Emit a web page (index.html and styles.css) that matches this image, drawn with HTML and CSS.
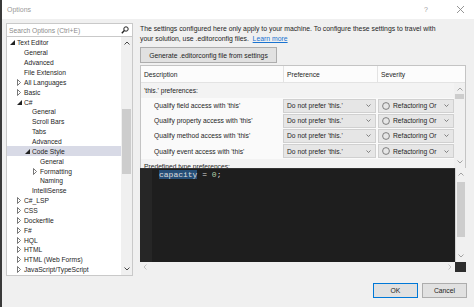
FILE: index.html
```html
<!DOCTYPE html>
<html lang="en">
<head>
    <meta charset="UTF-8">
    <meta name="viewport" content="width=device-width, initial-scale=1.0">
    <title>Options</title>
    <link rel="stylesheet" href="styles.css">
</head>
<body>
    <div class="dialog">
        <div class="titlebar">
            <span class="title">Options</span>
            <span class="help">?</span>
            <svg class="close" width="9" height="9" viewBox="0 0 9 9"><path d="M1 1L8 8M8 1L1 8" stroke="#8a8a8a" stroke-width="0.9"/></svg>
        </div>

        <div class="main">
            <div class="left">
                <div class="search">
                    <span class="search-text">Search Options (Ctrl+E)</span>
                    <svg class="search-icon" width="8" height="8" viewBox="0 0 8 8"><circle cx="5" cy="3" r="2.2" fill="none" stroke="#222" stroke-width="1"/><path d="M3.4 4.6L0.8 7.2" stroke="#222" stroke-width="1.4"/></svg>
                </div>
                <div class="tree">
                    <div class="tree-items">
                        <div class="node lvl0"><span class="tog"><svg width="5" height="5" viewBox="0 0 5 5"><path d="M5 0V5H0Z" fill="#222"/></svg></span>Text Editor</div>
                        <div class="node lvl1"><span class="tog"></span>General</div>
                        <div class="node lvl1"><span class="tog"></span>Advanced</div>
                        <div class="node lvl1"><span class="tog"></span>File Extension</div>
                        <div class="node lvl1"><span class="tog"><svg width="4" height="7" viewBox="0 0 4 7"><path d="M0.5 0.5L3.5 3.5L0.5 6.5Z" fill="none" stroke="#555" stroke-width="0.8"/></svg></span>All Languages</div>
                        <div class="node lvl1"><span class="tog"><svg width="4" height="7" viewBox="0 0 4 7"><path d="M0.5 0.5L3.5 3.5L0.5 6.5Z" fill="none" stroke="#555" stroke-width="0.8"/></svg></span>Basic</div>
                        <div class="node lvl1"><span class="tog"><svg width="5" height="5" viewBox="0 0 5 5"><path d="M5 0V5H0Z" fill="#222"/></svg></span>C#</div>
                        <div class="node lvl2"><span class="tog"></span>General</div>
                        <div class="node lvl2"><span class="tog"></span>Scroll Bars</div>
                        <div class="node lvl2"><span class="tog"></span>Tabs</div>
                        <div class="node lvl2"><span class="tog"></span>Advanced</div>
                        <div class="node lvl2 selected"><span class="tog"><svg width="5" height="5" viewBox="0 0 5 5"><path d="M5 0V5H0Z" fill="#222"/></svg></span>Code Style</div>
                        <div class="node lvl3"><span class="tog"></span>General</div>
                        <div class="node lvl3"><span class="tog"><svg width="4" height="7" viewBox="0 0 4 7"><path d="M0.5 0.5L3.5 3.5L0.5 6.5Z" fill="none" stroke="#555" stroke-width="0.8"/></svg></span>Formatting</div>
                        <div class="node lvl3"><span class="tog"></span>Naming</div>
                        <div class="node lvl2"><span class="tog"></span>IntelliSense</div>
                        <div class="node lvl1"><span class="tog"><svg width="4" height="7" viewBox="0 0 4 7"><path d="M0.5 0.5L3.5 3.5L0.5 6.5Z" fill="none" stroke="#555" stroke-width="0.8"/></svg></span>C#_LSP</div>
                        <div class="node lvl1"><span class="tog"><svg width="4" height="7" viewBox="0 0 4 7"><path d="M0.5 0.5L3.5 3.5L0.5 6.5Z" fill="none" stroke="#555" stroke-width="0.8"/></svg></span>CSS</div>
                        <div class="node lvl1"><span class="tog"><svg width="4" height="7" viewBox="0 0 4 7"><path d="M0.5 0.5L3.5 3.5L0.5 6.5Z" fill="none" stroke="#555" stroke-width="0.8"/></svg></span>Dockerfile</div>
                        <div class="node lvl1"><span class="tog"><svg width="4" height="7" viewBox="0 0 4 7"><path d="M0.5 0.5L3.5 3.5L0.5 6.5Z" fill="none" stroke="#555" stroke-width="0.8"/></svg></span>F#</div>
                        <div class="node lvl1"><span class="tog"><svg width="4" height="7" viewBox="0 0 4 7"><path d="M0.5 0.5L3.5 3.5L0.5 6.5Z" fill="none" stroke="#555" stroke-width="0.8"/></svg></span>HQL</div>
                        <div class="node lvl1"><span class="tog"><svg width="4" height="7" viewBox="0 0 4 7"><path d="M0.5 0.5L3.5 3.5L0.5 6.5Z" fill="none" stroke="#555" stroke-width="0.8"/></svg></span>HTML</div>
                        <div class="node lvl1"><span class="tog"><svg width="4" height="7" viewBox="0 0 4 7"><path d="M0.5 0.5L3.5 3.5L0.5 6.5Z" fill="none" stroke="#555" stroke-width="0.8"/></svg></span>HTML (Web Forms)</div>
                        <div class="node lvl1"><span class="tog"><svg width="4" height="7" viewBox="0 0 4 7"><path d="M0.5 0.5L3.5 3.5L0.5 6.5Z" fill="none" stroke="#555" stroke-width="0.8"/></svg></span>JavaScript/TypeScript</div>
                    </div>
                    <div class="vscroll">
                        <svg class="sarrow" width="6" height="4" viewBox="0 0 6 4"><path d="M0.5 3.5L3 1L5.5 3.5" fill="none" stroke="#333" stroke-width="0.9"/></svg>
                        <div class="track"><div class="thumb tree-thumb"></div></div>
                        <svg class="sarrow" width="6" height="4" viewBox="0 0 6 4"><path d="M0.5 0.5L3 3L5.5 0.5" fill="none" stroke="#333" stroke-width="0.9"/></svg>
                    </div>
                </div>
            </div>

            <div class="right">
                <p class="info">The settings configured here only apply to your machine. To configure these settings to travel with<br>your solution, use .editorconfig files.&nbsp; <a href="#">Learn more</a></p>
                <button class="gen-btn">Generate .editorconfig file from settings</button>

                <div class="grid">
                    <div class="grid-head">
                        <div class="col-desc">Description</div>
                        <div class="col-pref">Preference</div>
                        <div class="col-sev">Severity</div>
                    </div>
                    <div class="grid-body">
                        <div class="rows">
                            <div class="group-row">'this.' preferences:</div>
                            <div class="row">
                                <div class="desc">Qualify field access with 'this'</div>
                                <div class="combo pref">Do not prefer 'this.'<svg class="chev" width="5" height="3" viewBox="0 0 5 3"><path d="M0.5 0.5L2.5 2.5L4.5 0.5" fill="none" stroke="#666" stroke-width="0.8"/></svg></div>
                                <div class="combo sev"><svg class="radio" width="8" height="8" viewBox="0 0 8 8"><circle cx="4" cy="4" r="3.4" fill="none" stroke="#666" stroke-width="0.8"/></svg>Refactoring Or<svg class="chev" width="5" height="3" viewBox="0 0 5 3"><path d="M0.5 0.5L2.5 2.5L4.5 0.5" fill="none" stroke="#666" stroke-width="0.8"/></svg></div>
                            </div>
                            <div class="row">
                                <div class="desc">Qualify property access with 'this'</div>
                                <div class="combo pref">Do not prefer 'this.'<svg class="chev" width="5" height="3" viewBox="0 0 5 3"><path d="M0.5 0.5L2.5 2.5L4.5 0.5" fill="none" stroke="#666" stroke-width="0.8"/></svg></div>
                                <div class="combo sev"><svg class="radio" width="8" height="8" viewBox="0 0 8 8"><circle cx="4" cy="4" r="3.4" fill="none" stroke="#666" stroke-width="0.8"/></svg>Refactoring Or<svg class="chev" width="5" height="3" viewBox="0 0 5 3"><path d="M0.5 0.5L2.5 2.5L4.5 0.5" fill="none" stroke="#666" stroke-width="0.8"/></svg></div>
                            </div>
                            <div class="row">
                                <div class="desc">Qualify method access with 'this'</div>
                                <div class="combo pref">Do not prefer 'this.'<svg class="chev" width="5" height="3" viewBox="0 0 5 3"><path d="M0.5 0.5L2.5 2.5L4.5 0.5" fill="none" stroke="#666" stroke-width="0.8"/></svg></div>
                                <div class="combo sev"><svg class="radio" width="8" height="8" viewBox="0 0 8 8"><circle cx="4" cy="4" r="3.4" fill="none" stroke="#666" stroke-width="0.8"/></svg>Refactoring Or<svg class="chev" width="5" height="3" viewBox="0 0 5 3"><path d="M0.5 0.5L2.5 2.5L4.5 0.5" fill="none" stroke="#666" stroke-width="0.8"/></svg></div>
                            </div>
                            <div class="row">
                                <div class="desc">Qualify event access with 'this'</div>
                                <div class="combo pref">Do not prefer 'this.'<svg class="chev" width="5" height="3" viewBox="0 0 5 3"><path d="M0.5 0.5L2.5 2.5L4.5 0.5" fill="none" stroke="#666" stroke-width="0.8"/></svg></div>
                                <div class="combo sev"><svg class="radio" width="8" height="8" viewBox="0 0 8 8"><circle cx="4" cy="4" r="3.4" fill="none" stroke="#666" stroke-width="0.8"/></svg>Refactoring Or<svg class="chev" width="5" height="3" viewBox="0 0 5 3"><path d="M0.5 0.5L2.5 2.5L4.5 0.5" fill="none" stroke="#666" stroke-width="0.8"/></svg></div>
                            </div>
                            <div class="group-row">Predefined type preferences:</div>
                        </div>
                        <div class="vscroll">
                            <svg class="sarrow" width="6" height="4" viewBox="0 0 6 4"><path d="M0.5 3.5L3 1L5.5 3.5" fill="none" stroke="#999" stroke-width="0.9"/></svg>
                            <div class="track"><div class="thumb grid-thumb"></div></div>
                            <svg class="sarrow" width="6" height="4" viewBox="0 0 6 4"><path d="M0.5 0.5L3 3L5.5 0.5" fill="none" stroke="#999" stroke-width="0.9"/></svg>
                        </div>
                    </div>
                </div>

                <div class="editor">
                    <div class="code-area">
                        <div class="gutter"></div>
                        <pre class="code"><span class="sel">capacity</span> = <span class="num">0</span>;</pre>
                    </div>
                    <div class="vscroll">
                        <svg class="sarrow" width="6" height="4" viewBox="0 0 6 4"><path d="M0.5 3.5L3 1L5.5 3.5" fill="none" stroke="#999" stroke-width="0.9"/></svg>
                        <div class="track"><div class="thumb code-thumb"></div></div>
                        <svg class="sarrow" width="6" height="4" viewBox="0 0 6 4"><path d="M0.5 0.5L3 3L5.5 0.5" fill="none" stroke="#999" stroke-width="0.9"/></svg>
                    </div>
                    <div class="hscroll">
                        <svg class="sarrow" width="4" height="6" viewBox="0 0 4 6"><path d="M3.5 0.5L1 3L3.5 5.5" fill="none" stroke="#bbb" stroke-width="0.9"/></svg>
                        <svg class="sarrow" width="4" height="6" viewBox="0 0 4 6"><path d="M0.5 0.5L3 3L0.5 5.5" fill="none" stroke="#bbb" stroke-width="0.9"/></svg>
                    </div>
                    <div class="corner"></div>
                </div>
            </div>
        </div>

        <div class="footer">
            <button class="dlg-btn default">OK</button>
            <button class="dlg-btn">Cancel</button>
        </div>
    </div>
</body>
</html>
```

FILE: styles.css
```css
body {
    margin: 0;
    font-family: "Liberation Sans", Arial, sans-serif;
    font-size: 6.7px;
    color: #1e1e1e;
    background-color: #f0f0f0;
}

.dialog {
    width: 474px;
    height: 307px;
    border-left: 2px solid #3a3a3a;
    box-sizing: border-box;
    display: flex;
    flex-direction: column;
    overflow: hidden;
}

/* title bar */
.titlebar {
    height: 19px;
    background-color: #fff;
    display: flex;
    align-items: center;
    padding: 0 9px 0 5px;
}

.title {
    color: #9a9a9a;
    font-size: 7px;
    flex: 1;
}

.help {
    color: #9a9a9a;
    font-size: 7px;
    margin-right: 28px;
}

/* main split */
.main {
    display: flex;
    gap: 7px;
    padding: 4px 8px 0 4px;
    height: 253px;
}

.left {
    width: 127px;
    display: flex;
    flex-direction: column;
}

.search {
    height: 14px;
    background-color: #fff;
    border: 1px solid #c9c9c9;
    box-sizing: border-box;
    display: flex;
    align-items: center;
    padding: 0 3px 0 2px;
}

.search-text {
    flex: 1;
    color: #8c8c8c;
}

.tree {
    height: 239px;
    background-color: #fff;
    border: 1px solid #c9c9c9;
    border-top: none;
    box-sizing: border-box;
    display: flex;
}

.tree-items {
    flex: 1;
    padding-top: 1px;
}

.node {
    height: 9.87px;
    display: flex;
    align-items: center;
    white-space: nowrap;
}

.node.selected {
    background-color: #d8dae6;
}

.tog {
    width: 7px;
    display: flex;
    align-items: center;
}

.lvl0 { padding-left: 3px; }
.lvl1 { padding-left: 10px; }
.lvl2 { padding-left: 18px; }
.lvl3 { padding-left: 26px; }

/* scrollbars */
.vscroll {
    width: 11px;
    background-color: #f0f0f0;
    display: flex;
    flex-direction: column;
    align-items: center;
    padding: 4px 0;
    box-sizing: border-box;
}

.track {
    flex: 1;
    width: 100%;
    position: relative;
}

.thumb {
    position: absolute;
    left: 1px;
    right: 1px;
    background-color: #cdcdcd;
}

.tree-thumb { top: 64px; height: 65px; }
.grid-thumb { top: 3px; height: 5px; }
.code-thumb { top: 6px; height: 55px; }

/* right side */
.right {
    width: 326px;
    display: flex;
    flex-direction: column;
}

.info {
    margin: 0;
    padding-top: 1px;
    line-height: 10px;
    font-size: 6.85px;
    white-space: nowrap;
}

.info a {
    color: #1a73d0;
}

.gen-btn {
    align-self: flex-start;
    margin-top: 3px;
    height: 16px;
    width: 137px;
    padding: 0;
    font-family: inherit;
    font-size: 6.8px;
    color: #1e1e1e;
    background-color: #e1e1e1;
    border: 1px solid #adadad;
}

.grid {
    margin-top: 2px;
    height: 103px;
    background-color: #fafafa;
    border: 1px solid #c4c4c4;
    border-bottom: none;
    box-sizing: border-box;
    display: flex;
    flex-direction: column;
}

.grid-head {
    height: 16px;
    flex-shrink: 0;
    display: flex;
    align-items: stretch;
    border-bottom: 1px solid #e3e3e3;
    background-color: #fcfcfc;
}

.grid-head div {
    display: flex;
    align-items: center;
    padding-left: 3px;
}

.col-desc { width: 139px; border-right: 1px solid #e3e3e3; }
.col-pref { width: 90px; border-right: 1px solid #e3e3e3; }
.col-sev { flex: 1; }

.grid-body {
    flex: 1;
    display: flex;
    overflow: hidden;
}

.rows {
    flex: 1;
    overflow: hidden;
}

.group-row {
    height: 15px;
    display: flex;
    align-items: center;
    padding-left: 3px;
    background-color: #f3f3f3;
}

.row {
    height: 15.2px;
    display: flex;
    align-items: center;
}

.desc {
    width: 129px;
    padding-left: 13px;
}

.combo {
    height: 14px;
    box-sizing: border-box;
    background-color: #e6e6e6;
    border: 1px solid #d0d0d0;
    display: flex;
    align-items: center;
    padding: 0 4px 0 3px;
}

.combo.pref { width: 93px; }
.combo.sev { width: 76px; margin-left: 2px; }

.chev {
    margin-left: auto;
}

.radio {
    margin-right: 3px;
}

/* code editor */
.editor {
    height: 104px;
    display: grid;
    grid-template-columns: 1fr 11px;
    grid-template-rows: 1fr 10px;
}

.code-area {
    background-color: #1e1e1e;
    display: flex;
    border-top: 1px solid #333;
}

.gutter {
    width: 12px;
    background-color: #262626;
}

.code {
    margin: 0;
    padding: 1px 0 0 7px;
    font-family: "Liberation Mono", "DejaVu Sans Mono", monospace;
    font-size: 8px;
    line-height: 10px;
    color: #dcdcdc;
}

.code .sel {
    background-color: #264f78;
}

.code .num {
    color: #b5cea8;
}

.editor .vscroll {
    border-left: 1px solid #d4d4d4;
}

.hscroll {
    background-color: #f0f0f0;
    display: flex;
    align-items: center;
    justify-content: space-between;
    padding: 0 3px;
}

.corner {
    background-color: #2d2d2d;
}

/* footer */
.footer {
    display: flex;
    justify-content: flex-end;
    gap: 4px;
    padding: 7px 7px 0 0;
}

.dlg-btn {
    width: 45px;
    height: 15px;
    padding: 0;
    font-family: inherit;
    font-size: 6.8px;
    color: #1e1e1e;
    background-color: #e1e1e1;
    border: 1px solid #adadad;
}

.dlg-btn.default {
    border-color: #0078d7;
}
```
